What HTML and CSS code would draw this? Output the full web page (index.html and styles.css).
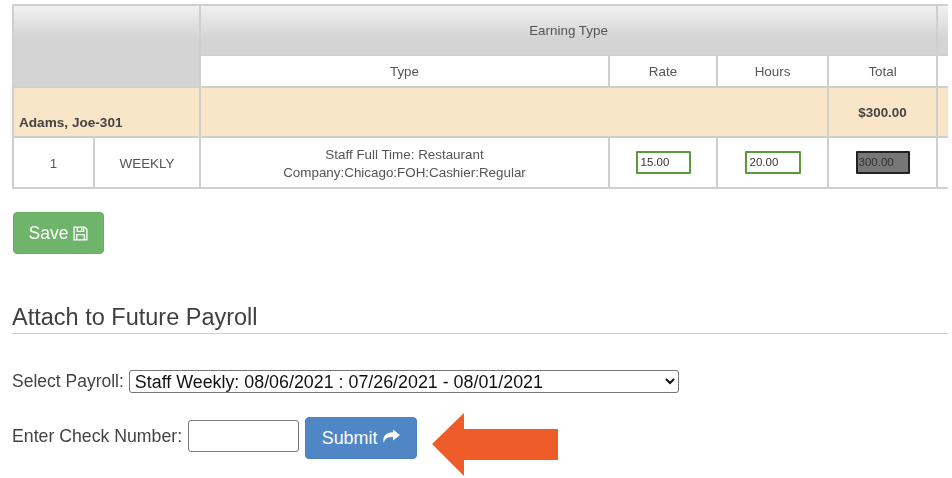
FILE: index.html
```html
<!DOCTYPE html>
<html lang="en">
<head>
<meta charset="utf-8">
<title>Attach to Future Payroll</title>
<link rel="stylesheet" href="styles.css">
</head>
<body>
<main class="page">
  <div class="table-clip">
    <table class="grid">
      <colgroup>
        <col class="c1"><col class="c2"><col class="c3"><col class="c4"><col class="c5"><col class="c6"><col class="c7">
      </colgroup>
      <tr class="r-head">
        <th class="gray" colspan="2" rowspan="2"></th>
        <th class="gray" colspan="4">Earning Type</th>
        <th class="gray"></th>
      </tr>
      <tr class="r-sub">
        <td>Type</td><td>Rate</td><td>Hours</td><td>Total</td><td></td>
      </tr>
      <tr class="r-emp">
        <td class="emp name" colspan="2">Adams, Joe-301</td>
        <td class="emp" colspan="3"></td>
        <td class="emp amount">$300.00</td>
        <td class="emp"></td>
      </tr>
      <tr class="r-data">
        <td>1</td>
        <td>WEEKLY</td>
        <td>Staff Full Time: Restaurant<br>Company:Chicago:FOH:Cashier:Regular</td>
        <td class="input-cell"><input class="cell-input" type="text" value="15.00"></td>
        <td class="input-cell"><input class="cell-input wide" type="text" value="20.00"></td>
        <td class="input-cell"><input class="cell-input total" type="text" value="300.00"></td>
        <td></td>
      </tr>
    </table>
  </div>

  <button class="btn save" type="button">Save
    <svg class="ico-save" viewBox="0 0 14 14" aria-hidden="true"><path d="M1 1h10l2 2v10H1z M4 1v4h6V1 M3.500 13V8h7v5" fill="none" stroke="currentColor" stroke-width="1.200"/><rect x="7.500" y="2" width="1.400" height="2" fill="currentColor"/></svg>
  </button>

  <h2 class="section">Attach to Future Payroll</h2>

  <div class="form-row select-row">
    <label for="payroll">Select Payroll:</label>
    <select id="payroll" class="payroll"><option>Staff Weekly: 08/06/2021 : 07/26/2021 - 08/01/2021</option></select>
  </div>

  <div class="form-row check-row">
    <label class="check-label" for="check">Enter Check Number:</label>
    <input id="check" class="check" type="text">
    <button class="btn submit" type="button">Submit
      <svg class="ico-share" viewBox="0 0 18 15" aria-hidden="true"><path d="M11 0.500 L18 6 L11 11.500 V8 C6.500 8 3 8.800 1.800 14 C0.300 9 2.500 3.600 11 3.300 Z" fill="currentColor"/></svg>
    </button>
    <svg class="arrow" viewBox="0 0 126 63" aria-hidden="true"><path d="M0 31 L32 0 V16 H126 V47 H32 V63 Z" fill="#ee5c2a"/></svg>
  </div>
</main>
</body>
</html>
```
FILE: styles.css
```css
html, body {
  margin: 0;
  padding: 0;
  background: #fff;
}
body {
  width: 952px;
  height: 478px;
  overflow: hidden;
  font-family: "Liberation Sans", Arial, sans-serif;
  color: #444;
}
.page {
  padding: 4px 0 0 12px;
  filter: blur(0.3px);
}
.table-clip {
  width: 936px;
  overflow: hidden;
}
.grid {
  border-collapse: collapse;
  table-layout: fixed;
  width: 950px;
  font-size: 13.400px;
  color: #555;
}
.grid th, .grid td {
  border: 2px solid #cfcfcf;
  text-align: center;
  font-weight: normal;
  padding: 1px 0 0;
  vertical-align: middle;
}
.c1 { width: 81px; }
.c2 { width: 106px; }
.c3 { width: 409px; }
.c4 { width: 108px; }
.c5 { width: 111px; }
.c6 { width: 109px; }
.c7 { width: 26px; }
.r-head { height: 50px; }
.r-sub { height: 32px; }
.r-emp { height: 50px; }
.r-data { height: 51px; }
.gray {
  background: linear-gradient(#f1f1f1 0, #d4d4d4 32px, #d4d4d4 100%);
}
.r-data td {
  line-height: 18px;
  padding-top: 3px;
}
.r-data td.input-cell {
  padding: 0 0 1px;
}
.emp {
  background: #f9e5c8;
}
.grid td.name {
  text-align: left;
  vertical-align: bottom;
  padding: 0 0 6px 5px;
  font-weight: bold;
  font-size: 13.600px;
  color: #444;
}
.grid td.amount {
  font-weight: bold;
  color: #444;
}
.cell-input {
  box-sizing: border-box;
  width: 55px;
  height: 23px;
  border: 2px solid #5b9a3c;
  border-radius: 1px;
  padding: 1px 3px;
  font: 11.500px "Liberation Sans", Arial, sans-serif;
  color: #333;
  background: #fff;
  vertical-align: middle;
}
.cell-input.wide { width: 56px; }
.cell-input.total {
  width: 54px;
  border-color: #222;
  background: #777;
  padding: 1px 1px;
  color: #333;
}
.btn {
  display: inline-flex;
  align-items: center;
  justify-content: center;
  border-radius: 4px;
  color: #fff;
  font-family: "Liberation Sans", Arial, sans-serif;
  font-size: 17.500px;
  padding: 0;
}
.save {
  display: flex;
  width: 91px;
  height: 42px;
  margin: 23px 0 0 1px;
  gap: 5px;
  background: #6eb46a;
  border: 1px solid #66ac62;
}
.ico-save { width: 15px; height: 15px; }
.section {
  margin: 50px 0 0;
  padding: 0 0 3px;
  font-size: 23.500px;
  line-height: 26px;
  font-weight: normal;
  color: #3f3f3f;
  border-bottom: 1px solid #cdcdcd;
  width: 936px;
}
.form-row {
  display: flex;
  align-items: center;
  font-size: 17.500px;
  color: #444;
}
.select-row { margin-top: 36px; }
.payroll {
  width: 550px;
  height: 23px;
  margin-left: 5px;
  padding: 0 0 0 1px;
  font: 17.850px "Liberation Sans", Arial, sans-serif;
  color: #111;
  background: #fff;
  border: 1px solid #777;
  border-radius: 3px;
}
.check-row {
  margin-top: 24px;
  position: relative;
}
.check-label {
  font-size: 17.700px;
  margin-top: -4px;
}
.check {
  box-sizing: border-box;
  align-self: flex-start;
  width: 111px;
  height: 32px;
  margin: 3px 0 0 6px;
  border: 1px solid #777;
  border-radius: 3px;
  background: #fff;
}
.submit {
  width: 112px;
  height: 42px;
  margin-left: 6px;
  gap: 5px;
  font-size: 17.900px;
  background: #4f87c6;
  border: 1px solid #4a80bd;
}
.ico-share { width: 18px; height: 15px; margin-top: -3px; }
.arrow {
  position: absolute;
  left: 420px;
  top: -4px;
  width: 126px;
  height: 63px;
}
```
